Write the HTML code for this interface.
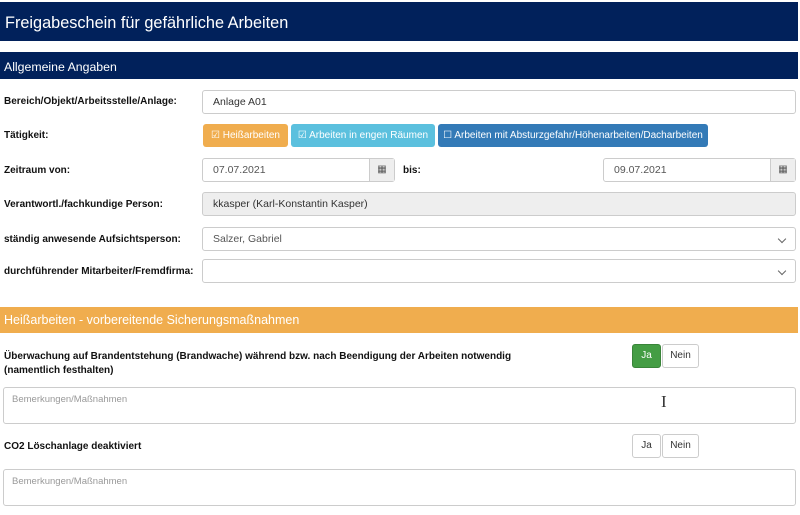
<!DOCTYPE html>
<html><head><meta charset="utf-8"><style>
*{box-sizing:border-box}
body{margin:0;width:800px;height:515px;background:#fff;font-family:"Liberation Sans",Arial,sans-serif;position:relative;overflow:hidden;color:#222}
.a{position:absolute}
.bar{left:0;width:798px;background:#01215b;color:#fff}
.lbl{left:4px;font-size:10px;font-weight:bold;color:#111}
.inp{border:1px solid #ccc;border-radius:3px;background:#fff;height:24px;font-size:10.5px;color:#555;padding:6px 10px;line-height:11px}
.btn{height:23px;border-radius:3px;color:#fff;font-size:10px;line-height:23px;text-align:center}
.add{border-left:1px solid #ccc;background:#eee;position:absolute;right:0;top:0;bottom:0;width:25px;font-size:10px;text-align:center;line-height:22px;color:#555}
.chev{position:absolute;right:10px;top:8px;width:6px;height:6px;border-right:1px solid #666;border-bottom:1px solid #666;transform:rotate(45deg)}
.yn{height:24px;border:1px solid #ccc;border-radius:3px;font-size:10px;line-height:22px;text-align:center;color:#333;background:#fff}
.ta{border:1px solid #ccc;border-radius:3px;left:3px;width:793px;height:37px;font-size:9.5px;color:#999;padding:6px 8px}
</style></head><body>
<div class="a bar" style="top:2px;height:39px;font-size:16.3px;padding:12px 0 0 5px">Freigabeschein für gefährliche Arbeiten</div>
<div class="a bar" style="top:52px;height:27px;font-size:12.3px;padding:8px 0 0 4px">Allgemeine Angaben</div>

<div class="a lbl" style="top:96px">Bereich/Objekt/Arbeitsstelle/Anlage:</div>
<div class="a inp" style="left:202px;top:90px;width:594px;color:#333">Anlage A01</div>

<div class="a lbl" style="top:130px">Tätigkeit:</div>
<div class="a btn" style="left:203px;top:124px;width:85px;background:#f0ad4e">☑ Heißarbeiten</div>
<div class="a btn" style="left:291px;top:124px;width:144px;background:#5bc0de">☑ Arbeiten in engen Räumen</div>
<div class="a btn" style="left:438px;top:124px;width:270px;background:#337ab7">☐ Arbeiten mit Absturzgefahr/Höhenarbeiten/Dacharbeiten</div>

<div class="a lbl" style="top:165px">Zeitraum von:</div>
<div class="a inp" style="left:202px;top:158px;width:193px">07.07.2021<div class="add">▦</div></div>
<div class="a lbl" style="left:403px;top:165px">bis:</div>
<div class="a inp" style="left:603px;top:158px;width:193px">09.07.2021<div class="add">▦</div></div>

<div class="a lbl" style="top:199px">Verantwortl./fachkundige Person:</div>
<div class="a inp" style="left:202px;top:192px;width:594px;background:#eee;color:#333">kkasper (Karl-Konstantin Kasper)</div>

<div class="a lbl" style="top:234px">ständig anwesende Aufsichtsperson:</div>
<div class="a inp" style="left:202px;top:227px;width:594px">Salzer, Gabriel<div class="chev"></div></div>

<div class="a lbl" style="top:266px">durchführender Mitarbeiter/Fremdfirma:</div>
<div class="a inp" style="left:202px;top:259px;width:594px"><div class="chev"></div></div>

<div class="a" style="left:0;top:307px;width:798px;height:26px;background:#f0ad4e;color:#fff;font-size:12.5px;padding:6px 0 0 4px">Heißarbeiten - vorbereitende Sicherungsmaßnahmen</div>

<div class="a lbl" style="top:350px;line-height:14px">Überwachung auf Brandentstehung (Brandwache) während bzw. nach Beendigung der Arbeiten notwendig<br>(namentlich festhalten)</div>
<div class="a yn" style="left:632px;top:344px;width:29px;background:#449d44;border-color:#398439;color:#fff">Ja</div>
<div class="a yn" style="left:662px;top:344px;width:37px">Nein</div>
<div class="a ta" style="top:387px">Bemerkungen/Maßnahmen</div>
<div class="a" style="left:661px;top:392px;font-size:17px;color:#333;font-family:'Liberation Serif',serif">I</div>

<div class="a lbl" style="top:441px">CO2 Löschanlage deaktiviert</div>
<div class="a yn" style="left:632px;top:434px;width:29px">Ja</div>
<div class="a yn" style="left:662px;top:434px;width:37px">Nein</div>
<div class="a ta" style="top:469px">Bemerkungen/Maßnahmen</div>
</body></html>
